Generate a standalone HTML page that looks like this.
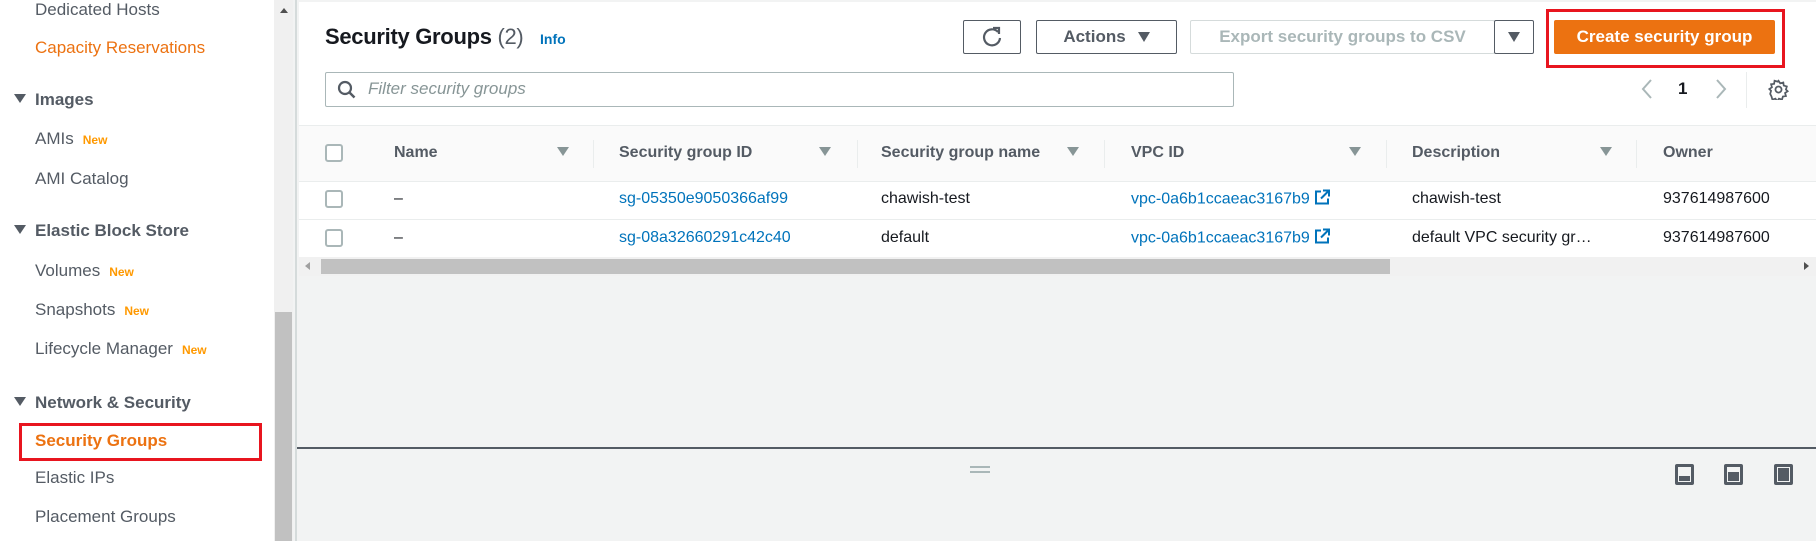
<!DOCTYPE html>
<html><head><meta charset="utf-8"><style>
*{box-sizing:border-box;margin:0;padding:0}
body{width:1816px;height:541px;overflow:hidden;font-family:"Liberation Sans",sans-serif;background:#f2f3f3;position:relative;color:#16191f}
.a{position:absolute;white-space:nowrap}
.side{position:absolute;left:0;top:0;width:274px;height:541px;background:#fff}
.si{position:absolute;left:35px;font-size:17px;color:#545b64;transform:translateY(-50%)}
.sh{position:absolute;left:14px;font-size:17px;font-weight:bold;color:#545b64;transform:translateY(-50%)}
.sh:before{content:"";display:inline-block;border-left:6px solid transparent;border-right:6px solid transparent;border-top:9px solid #545b64;margin-right:9px;vertical-align:2px}
.new{color:#ff9900;font-size:12px;font-weight:bold;margin-left:9px}
.btn{position:absolute;top:20px;height:34px;border:1px solid #545b64;border-radius:2px;background:#fff;font-weight:bold;font-size:17px;color:#545b64;display:flex;align-items:center;justify-content:center}
.th{position:absolute;font-weight:bold;font-size:16px;color:#545b64;top:153px;transform:translateY(-50%)}
.td{position:absolute;font-size:16px;color:#16191f;transform:translateY(-50%)}
.lk{color:#0073bb}
.sort{position:absolute;top:147px;width:0;height:0;border-left:6px solid transparent;border-right:6px solid transparent;border-top:9px solid #879596}
.sep{position:absolute;top:140px;width:1px;height:28px;background:#eaeded}
.cb{position:absolute;left:325px;width:18px;height:18px;border:2px solid #aab7b8;border-radius:3px;background:#fff;transform:translateY(-50%)}
</style></head><body>
<div class="side">
<div class="si" style="top:10px">Dedicated Hosts</div>
<div class="si" style="top:48px;color:#ec7211">Capacity Reservations</div>
<div class="sh" style="top:100px">Images</div>
<div class="si" style="top:139px">AMIs<span class="new">New</span></div>
<div class="si" style="top:179px">AMI Catalog</div>
<div class="sh" style="top:231px">Elastic Block Store</div>
<div class="si" style="top:271px">Volumes<span class="new">New</span></div>
<div class="si" style="top:310px">Snapshots<span class="new">New</span></div>
<div class="si" style="top:349px">Lifecycle Manager<span class="new">New</span></div>
<div class="sh" style="top:403px">Network &amp; Security</div>
<div class="si" style="top:441px;color:#ec7211;font-weight:bold">Security Groups</div>
<div class="a" style="left:19px;top:423px;width:243px;height:38px;border:3px solid #e8151f"></div>
<div class="si" style="top:478px">Elastic IPs</div>
<div class="si" style="top:517px">Placement Groups</div>
</div>
<div class="a" style="left:274px;top:0;width:19px;height:541px;background:#f0f0f0"></div>
<div class="a" style="left:275px;top:312px;width:17px;height:229px;background:#c1c1c1"></div>
<div class="a" style="left:280px;top:8px;border-left:4px solid transparent;border-right:4px solid transparent;border-bottom:5px solid #505050"></div>
<div class="a" style="left:295px;top:0;width:2px;height:541px;background:#d5dbdb"></div>
<div class="a" style="left:299px;top:2px;width:1517px;height:255px;background:#fff"></div>
<div class="a" style="left:325px;top:24px;font-size:22px;font-weight:bold;letter-spacing:-0.3px">Security Groups <span style="font-weight:normal;color:#545b64">(2)</span></div>
<div class="a lk" style="left:540px;top:31px;font-size:14px;font-weight:bold">Info</div>
<div class="btn" style="left:963px;width:58px"><svg width="22" height="22" viewBox="0 0 22 22"><path d="M17 6A8 8 0 1 0 19 12" fill="none" stroke="#545b64" stroke-width="2.2"/><path d="M12 2h6v6" fill="none" stroke="#545b64" stroke-width="2.2"/></svg></div>
<div class="btn" style="left:1036px;width:141px">Actions <span style="margin-left:12px;border-left:6px solid transparent;border-right:6px solid transparent;border-top:10px solid #545b64"></span></div>
<div class="btn" style="left:1190px;width:305px;border-color:#d5dbdb;color:#aab7b8">Export security groups to CSV</div>
<div class="btn" style="left:1494px;width:40px"><span style="border-left:6px solid transparent;border-right:6px solid transparent;border-top:10px solid #545b64"></span></div>
<div class="btn" style="left:1554px;width:221px;background:#ec7211;border-color:#ec7211;color:#fff">Create security group</div>
<div class="a" style="left:1546px;top:9px;width:239px;height:59px;border:3px solid #e8151f"></div>
<div class="a" style="left:325px;top:72px;width:909px;height:35px;border:1px solid #aab7b8;border-radius:2px;background:#fff"></div>
<svg class="a" style="left:337px;top:80px" width="20" height="20" viewBox="0 0 20 20"><circle cx="8" cy="8" r="6" fill="none" stroke="#545b64" stroke-width="2.2"/><path d="M12.5 12.5l5 5" stroke="#545b64" stroke-width="2.5"/></svg>
<div class="a" style="left:368px;top:79px;font-size:17px;font-style:italic;color:#879596">Filter security groups</div>
<svg class="a" style="left:1640px;top:78px" width="14" height="22"><path d="M11 2L3 11l8 9" fill="none" stroke="#aab7b8" stroke-width="2"/></svg>
<div class="a" style="left:1678px;top:79px;font-size:17px;font-weight:bold">1</div>
<svg class="a" style="left:1714px;top:78px" width="14" height="22"><path d="M3 2l8 9-8 9" fill="none" stroke="#aab7b8" stroke-width="2"/></svg>
<div class="a" style="left:1746px;top:72px;width:1px;height:36px;background:#eaeded"></div>
<svg class="a" style="left:1768px;top:79px" width="21" height="21" viewBox="0 0 24 24"><path d="M12 2l2 3 3.5-1 .5 3.5 3.5 1-1 3.5 2 2-3 2 1 3.5-3.5.5-1 3.5-3.5-1-2 3-2-3-3.5 1-1-3.5L2.5 17l1-3.5-2-2 3-2-1-3.5L7 5.5 7.5 2 11 3z" fill="none" stroke="#545b64" stroke-width="2"/><circle cx="12" cy="12" r="3.5" fill="none" stroke="#545b64" stroke-width="2"/></svg>
<div class="a" style="left:299px;top:125px;width:1517px;height:57px;background:#fafafa;border-top:1px solid #eaeded;border-bottom:1px solid #eaeded"></div>
<div class="cb" style="top:153px"></div>
<div class="th" style="left:394px">Name</div><div class="sort" style="left:557px"></div><div class="sep" style="left:593px"></div>
<div class="th" style="left:619px">Security group ID</div><div class="sort" style="left:819px"></div><div class="sep" style="left:857px"></div>
<div class="th" style="left:881px">Security group name</div><div class="sort" style="left:1067px"></div><div class="sep" style="left:1104px"></div>
<div class="th" style="left:1131px">VPC ID</div><div class="sort" style="left:1349px"></div><div class="sep" style="left:1386px"></div>
<div class="th" style="left:1412px">Description</div><div class="sort" style="left:1600px"></div><div class="sep" style="left:1636px"></div>
<div class="th" style="left:1663px">Owner</div>
<div class="a" style="left:299px;top:219px;width:1517px;height:1px;background:#eaeded"></div>
<div class="cb" style="top:199px"></div><div class="cb" style="top:238px"></div>
<div class="td" style="left:394px;top:199px">–</div><div class="td" style="left:394px;top:238px">–</div>
<div class="td lk" style="left:619px;top:199px">sg-05350e9050366af99</div><div class="td lk" style="left:619px;top:238px">sg-08a32660291c42c40</div>
<div class="td" style="left:881px;top:199px">chawish-test</div><div class="td" style="left:881px;top:238px">default</div>
<div class="td lk" style="left:1131px;top:199px">vpc-0a6b1ccaeac3167b9 <svg width="16" height="16" viewBox="0 0 16 16" style="vertical-align:-2px"><path d="M7 2H2v12h12V9" fill="none" stroke="#0073bb" stroke-width="2"/><path d="M9 1h6v6M15 1L7 9" fill="none" stroke="#0073bb" stroke-width="2"/></svg></div>
<div class="td lk" style="left:1131px;top:238px">vpc-0a6b1ccaeac3167b9 <svg width="16" height="16" viewBox="0 0 16 16" style="vertical-align:-2px"><path d="M7 2H2v12h12V9" fill="none" stroke="#0073bb" stroke-width="2"/><path d="M9 1h6v6M15 1L7 9" fill="none" stroke="#0073bb" stroke-width="2"/></svg></div>
<div class="td" style="left:1412px;top:199px">chawish-test</div><div class="td" style="left:1412px;top:238px">default VPC security gr…</div>
<div class="td" style="left:1663px;top:199px">937614987600</div><div class="td" style="left:1663px;top:238px">937614987600</div>
<div class="a" style="left:299px;top:257px;width:1517px;height:19px;background:#f1f1f1"></div>
<div class="a" style="left:321px;top:259px;width:1069px;height:15px;background:#c1c1c1"></div>
<div class="a" style="left:305px;top:262px;border-top:4px solid transparent;border-bottom:4px solid transparent;border-right:5px solid #a0a0a0"></div>
<div class="a" style="left:1804px;top:262px;border-top:4px solid transparent;border-bottom:4px solid transparent;border-left:5px solid #505050"></div>
<div class="a" style="left:297px;top:447px;width:1519px;height:2px;background:#545b64"></div>
<div class="a" style="left:970px;top:466px;width:20px;height:2px;background:#aab7b8"></div>
<div class="a" style="left:970px;top:471px;width:20px;height:2px;background:#aab7b8"></div>
<div class="a" style="left:1675px;top:464px;width:19px;height:21px;border:3px solid #545b64;border-radius:2px"><div style="position:absolute;left:1px;bottom:1px;width:11px;height:5px;background:#545b64"></div></div>
<div class="a" style="left:1724px;top:464px;width:19px;height:21px;border:3px solid #545b64;border-radius:2px"><div style="position:absolute;left:1px;bottom:1px;width:11px;height:9px;background:#545b64"></div></div>
<div class="a" style="left:1774px;top:464px;width:19px;height:21px;border:3px solid #545b64;border-radius:2px"><div style="position:absolute;left:1px;top:1px;width:11px;height:13px;background:#545b64"></div></div>
</body></html>
